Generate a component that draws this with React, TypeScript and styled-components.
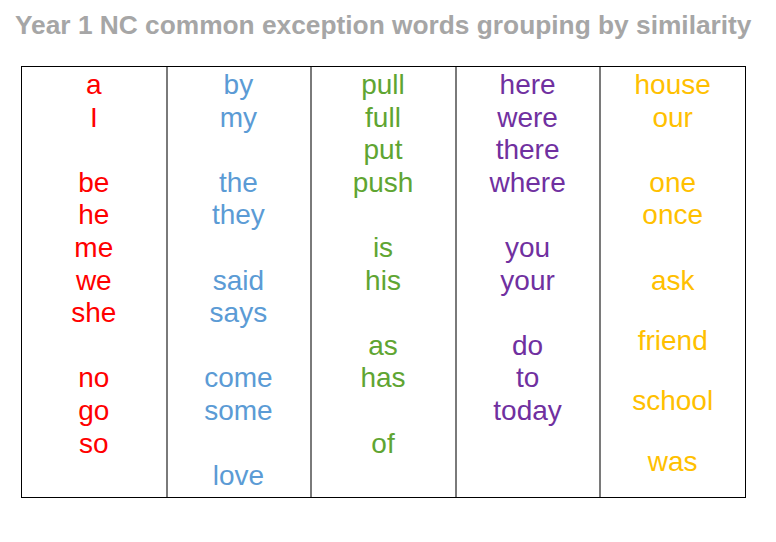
import React from "react";
import styled, { createGlobalStyle } from "styled-components";

const GlobalStyle = createGlobalStyle`
  html, body {
    margin: 0;
    padding: 0;
    background: #ffffff;
  }
  body {
    font-family: "Liberation Sans", Arial, sans-serif;
  }
`;

const Page = styled.div`
  width: 776px;
  height: 542px;
  display: flex;
  flex-direction: column;
  align-items: flex-start;
`;

const Title = styled.h1`
  margin: 11px 0 0 15px;
  font-size: 26.3px;
  line-height: 29px;
  font-weight: bold;
  color: #a6a6a6;
  white-space: nowrap;
`;

const Table = styled.div`
  margin: 26px 0 0 21px;
  width: 725px;
  height: 432px;
  box-sizing: border-box;
  border: 1px solid #000;
  display: grid;
  grid-template-columns: repeat(5, 1fr);
`;

const Column = styled.div<{ $color: string; $last?: boolean }>`
  display: flex;
  flex-direction: column;
  align-items: center;
  padding-top: 2px;
  color: ${(p) => p.$color};
  border-right: ${(p) => (p.$last ? "none" : "2px solid #7a7a7a")};
  margin-right: ${(p) => (p.$last ? "0" : "-1px")};
  font-size: 28px;
  line-height: 32.6px;
`;

const Word = styled.div``;

const Gap = styled.div<{ $h?: number }>`
  height: ${(p) => p.$h ?? 32.6}px;
`;

type Item = string | number | null;

const columns: { color: string; items: Item[] }[] = [
  { color: "#ff0000", items: ["a", "I", null, "be", "he", "me", "we", "she", null, "no", "go", "so"] },
  { color: "#5b9bd5", items: ["by", "my", null, "the", "they", null, "said", "says", null, "come", "some", null, "love"] },
  { color: "#5fa532", items: ["pull", "full", "put", "push", null, "is", "his", null, "as", "has", null, "of"] },
  { color: "#7030a0", items: ["here", "were", "there", "where", null, "you", "your", null, "do", "to", "today"] },
  { color: "#ffc000", items: ["house", "our", null, "one", "once", null, "ask", 28, "friend", 27.4, "school", 28.4, "was"] },
];

const App = () => (
  <Page>
    <GlobalStyle />
    <Title>Year 1 NC common exception words grouping by similarity</Title>
    <Table>
      {columns.map((col, ci) => (
        <Column key={ci} $color={col.color} $last={ci === columns.length - 1}>
          {col.items.map((item, i) =>
            typeof item === "string" ? (
              <Word key={i}>{item}</Word>
            ) : (
              <Gap key={i} $h={item ?? undefined} />
            )
          )}
        </Column>
      ))}
    </Table>
  </Page>
);

export default App;
